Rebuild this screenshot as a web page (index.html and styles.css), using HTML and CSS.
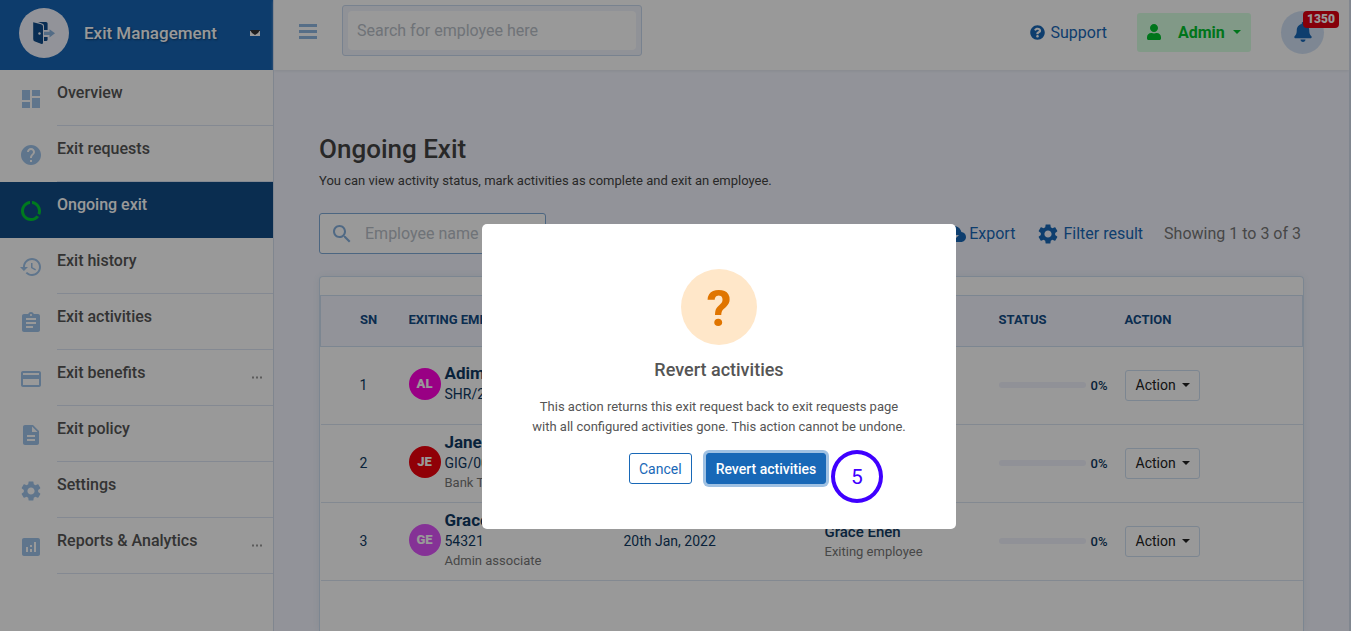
FILE: index.html
```html
<!DOCTYPE html>
<html lang="en">
<head>
<meta charset="utf-8">
<meta name="viewport" content="width=device-width, initial-scale=1">
<title>Ongoing Exit</title>
<link rel="stylesheet" href="styles.css">
</head>
<body>
<svg class="sprite" aria-hidden="true">
  <symbol id="i-gear" viewBox="0 0 24 24"><path d="M19.14 12.94c.04-.3.06-.61.06-.94 0-.32-.02-.64-.07-.94l2.03-1.58c.18-.14.23-.41.12-.61l-1.92-3.32c-.12-.22-.37-.29-.59-.22l-2.39.96c-.5-.38-1.03-.7-1.62-.94l-.36-2.54c-.04-.24-.24-.41-.48-.41h-3.84c-.24 0-.43.17-.47.41l-.36 2.54c-.59.24-1.13.57-1.62.94l-2.39-.96c-.22-.08-.47 0-.59.22L2.74 8.87c-.12.21-.08.47.12.61l2.03 1.58c-.05.3-.09.63-.09.94s.02.64.07.94l-2.03 1.58c-.18.14-.23.41-.12.61l1.92 3.32c.12.22.37.29.59.22l2.39-.96c.5.38 1.03.7 1.62.94l.36 2.54c.05.24.24.41.48.41h3.84c.24 0 .44-.17.47-.41l.36-2.54c.59-.24 1.13-.56 1.62-.94l2.39.96c.22.08.47 0 .59-.22l1.92-3.32c.12-.22.07-.47-.12-.61l-2.01-1.58zM12 15.6c-1.98 0-3.6-1.62-3.6-3.6s1.62-3.6 3.6-3.6 3.6 1.62 3.6 3.6-1.62 3.6-3.6 3.6z"/></symbol>
  <symbol id="i-dots" viewBox="0 0 12 4"><path d="M1 1h2v2H1zM5 1h2v2H5zM9 1h2v2H9z"/></symbol>
</svg>
<div class="app">
  <aside class="sidebar">
    <div class="brand">
      <span class="brand-logo">
        <svg width="24" height="24" viewBox="0 0 24 24"><path fill="#0f4c8a" d="M1.200 1.200 9 3.200Q11 3.800 11 5.500V21.500Q11 23.600 9 22.800L3 20.600Q1.200 20 1.200 18z"/><path fill="#0f4c8a" d="M6 1H14Q15.600 1 15.600 2.600V9H12V5Q12 3.400 10.500 2.800zM12 16h3.600v2.500Q15.600 20 14 20H12z"/><path fill="#8ab4df" d="M12 10.800h5.500V8.200L23 12.300 17.500 16.500V14H12z"/><circle cx="7.500" cy="12.500" r="1.200" fill="#f4f6ff"/></svg>
      </span>
      <span class="brand-name">Exit Management</span>
      <button class="brand-toggle" aria-label="Switch module"><svg width="10" height="6" viewBox="0 0 10 6"><path fill="#fff" d="M0 1h10v5H0z"/><path fill="#333" d="M0 0h10L8 3 5 5 2 3z"/></svg></button>
    </div>
    <nav class="menu">
      <a class="item" href="#"><svg class="icon" viewBox="0 0 24 24"><path d="M3 13h8V3H3v10zm0 8h8v-6H3v6zm10 0h8V11h-8v10zm0-18v6h8V3h-8z"/></svg><span class="label">Overview</span></a>
      <a class="item" href="#"><svg class="icon" viewBox="0 0 24 24"><path d="M12 2C6.480 2 2 6.480 2 12s4.480 10 10 10 10-4.480 10-10S17.520 2 12 2zm1 17h-2v-2h2v2zm2.070-7.750l-.9.920C13.450 12.900 13 13.500 13 15h-2v-.5c0-1.100.45-2.100 1.170-2.830l1.240-1.260c.37-.36.59-.86.59-1.410 0-1.100-.9-2-2-2s-2 .9-2 2H8c0-2.210 1.790-4 4-4s4 1.790 4 4c0 .88-.36 1.680-.93 2.250z"/></svg><span class="label">Exit requests</span></a>
      <a class="item active" href="#" aria-current="page"><svg class="icon" viewBox="0 0 24 24"><path d="M13 2.050v3.030c3.390.49 6 3.390 6 6.920 0 .9-.18 1.750-.48 2.540l2.600 1.530c.56-1.240.88-2.620.88-4.070 0-5.180-3.950-9.450-9-9.950zM12 19c-3.870 0-7-3.130-7-7 0-3.530 2.610-6.430 6-6.920V2.050c-5.060.5-9 4.760-9 9.950 0 5.520 4.470 10 9.990 10 3.310 0 6.240-1.610 8.060-4.090l-2.600-1.530C16.170 17.980 14.210 19 12 19z"/></svg><span class="label">Ongoing exit</span></a>
      <a class="item" href="#"><svg class="icon" viewBox="0 0 24 24"><path d="M13 3c-4.970 0-9 4.030-9 9H1l3.890 3.890.07.14L9 12H6c0-3.870 3.130-7 7-7s7 3.130 7 7-3.130 7-7 7c-1.930 0-3.680-.79-4.940-2.060l-1.420 1.420C8.270 19.990 10.510 21 13 21c4.970 0 9-4.030 9-9s-4.030-9-9-9zm-1 5v5l4.280 2.540.72-1.210-3.500-2.080V8H12z"/></svg><span class="label">Exit history</span></a>
      <a class="item" href="#"><svg class="icon" viewBox="0 0 24 24"><path d="M19 3h-4.180C14.400 1.840 13.300 1 12 1c-1.300 0-2.400.84-2.820 2H5c-1.100 0-2 .9-2 2v14c0 1.100.9 2 2 2h14c1.100 0 2-.9 2-2V5c0-1.100-.9-2-2-2zm-7 0c.55 0 1 .45 1 1s-.45 1-1 1-1-.45-1-1 .45-1 1-1zm2 14H7v-2h7v2zm3-4H7v-2h10v2zm0-4H7V7h10v2z"/></svg><span class="label">Exit activities</span></a>
      <a class="item" href="#"><svg class="icon" viewBox="0 0 24 24"><path d="M20 4H4c-1.110 0-1.990.89-1.990 2L2 18c0 1.110.89 2 2 2h16c1.110 0 2-.89 2-2V6c0-1.110-.89-2-2-2zm0 14H4v-6h16v6zm0-10H4V6h16v2z"/></svg><span class="label">Exit benefits</span><svg class="more" aria-hidden="true"><use href="#i-dots"/></svg></a>
      <a class="item" href="#"><svg class="icon" viewBox="0 0 24 24"><path d="M14 2H6c-1.100 0-1.990.9-1.990 2L4 20c0 1.100.89 2 1.990 2H18c1.100 0 2-.9 2-2V8l-6-6zm2 16H8v-2h8v2zm0-4H8v-2h8v2zm-3-5V3.500L18.500 9H13z"/></svg><span class="label">Exit policy</span></a>
      <a class="item" href="#"><svg class="icon"><use href="#i-gear"/></svg><span class="label">Settings</span></a>
      <a class="item" href="#"><svg class="icon" viewBox="0 0 24 24"><path d="M19 3H5c-1.100 0-2 .9-2 2v14c0 1.100.9 2 2 2h14c1.100 0 2-.9 2-2V5c0-1.100-.9-2-2-2zM9 17H7v-5h2v5zm4 0h-2v-3h2v3zm0-5h-2v-2h2v2zm4 5h-2V7h2v10z"/></svg><span class="label">Reports &amp; Analytics</span><svg class="more" aria-hidden="true"><use href="#i-dots"/></svg></a>
    </nav>
  </aside>

  <div class="page">
    <header class="topbar">
      <button class="burger" aria-label="Toggle menu"><svg width="18" height="16" viewBox="0 0 18 16"><path d="M0 0h18v3H0zM0 6h18v3H0zM0 12h18v3H0z"/></svg></button>
      <div class="global-search"><input type="search" aria-label="Search for employee here" placeholder="Search for employee here"></div>
      <a class="support" href="#"><svg width="15" height="15" viewBox="0 0 512 512"><path d="M504 256c0 137-111 248-248 248S8 393 8 256 119 8 256 8s248 111 248 248zM262.700 90c-54.500 0-89.300 23-116.500 63.800-3.500 5.300-2.400 12.400 2.700 16.300l34.700 26.300c5.200 3.900 12.600 3 16.700-2.100 17.900-22.700 30.100-35.800 57.300-35.800 20.400 0 45.700 13.100 45.700 33 0 15-12.400 22.700-32.500 34C247.100 238.500 216 254.900 216 296v4c0 6.600 5.400 12 12 12h56c6.600 0 12-5.400 12-12v-1.300c0-28.500 83.200-29.600 83.200-106.700 0-58-60.200-102-116.500-102zM256 338c-25.400 0-46 20.600-46 46s20.600 46 46 46 46-20.600 46-46-20.600-46-46-46z"/></svg>Support</a>
      <button class="admin"><svg width="14" height="16" viewBox="0 0 448 512"><path d="M224 256c70.700 0 128-57.300 128-128S294.700 0 224 0 96 57.300 96 128s57.300 128 128 128zm89.600 32h-16.700c-22.200 10.200-46.900 16-72.900 16s-50.600-5.800-72.900-16h-16.700C60.200 288 0 348.200 0 422.400V464c0 26.500 21.500 48 48 48h352c26.500 0 48-21.500 48-48v-41.600c0-74.200-60.200-134.400-134.400-134.400z"/></svg>Admin<span class="caret"></span></button>
      <button class="bell" aria-label="Notifications, 1350"><svg width="18" height="20" viewBox="0 0 448 512"><path d="M224 512c35.300 0 64-28.700 64-64H160c0 35.300 28.700 64 64 64zm215.400-149.700c-19.300-20.800-55.500-52-55.500-154.300 0-77.700-54.500-139.900-128-155.200V32c0-17.700-14.300-32-32-32s-32 14.300-32 32v20.800C118.600 68.100 64.100 130.300 64.100 208c0 102.300-36.200 133.500-55.500 154.300-6 6.400-8.700 14.100-8.600 21.700.1 16.400 13 32 32.100 32h383.800c19.100 0 32-15.600 32.100-32 .1-7.600-2.600-15.300-8.600-21.700z"/></svg><span class="count">1350</span></button>
    </header>

    <main class="content">
      <h1>Ongoing Exit</h1>
      <p class="lead">You can view activity status, mark activities as complete and exit an employee.</p>
      <div class="toolbar">
        <label class="filter-box"><svg width="24" height="24" viewBox="0 0 24 24"><path d="M15.500 14h-.79l-.28-.27C15.410 12.590 16 11.110 16 9.500 16 5.910 13.090 3 9.500 3S3 5.910 3 9.500 5.910 16 9.500 16c1.610 0 3.090-.59 4.230-1.570l.27.28v.79l5 4.990L20.490 19l-4.990-5zm-6 0C7.010 14 5 11.990 5 9.500S7.010 5 9.500 5 14 7.010 14 9.500 11.990 14 9.500 14z"/></svg><input type="text" aria-label="Employee name" placeholder="Employee name"></label>
        <a class="tool" href="#"><svg width="24" height="24" viewBox="0 0 24 24"><path d="M19.350 10.040C18.670 6.590 15.640 4 12 4 9.110 4 6.600 5.640 5.350 8.040 2.340 8.360 0 10.910 0 14c0 3.310 2.690 6 6 6h13c2.760 0 5-2.240 5-5 0-2.640-2.050-4.780-4.650-4.960zM17 13l-5 5-5-5h3V9h4v4h3z"/></svg>Export</a>
        <a class="tool" href="#"><svg width="24" height="24"><use href="#i-gear"/></svg>Filter result</a>
        <span class="showing">Showing 1 to 3 of 3</span>
      </div>
      <section class="card">
        <table>
          <colgroup><col class="c-sn"><col class="c-emp"><col class="c-date"><col class="c-by"><col class="c-status"><col></colgroup>
          <thead><tr><th>SN</th><th>EXITING EMPLOYEE</th><th>EXIT DATE</th><th>HANDLER</th><th>STATUS</th><th>ACTION</th></tr></thead>
          <tbody>
            <tr><td>1</td><td><div class="person"><span class="avatar al">AL</span><div><b>Adim L.</b><span>SHR/21</span></div></div></td><td></td><td></td><td><div class="status"><span class="track"></span>0%</div></td><td><button class="action">Action<span class="caret"></span></button></td></tr>
            <tr><td>2</td><td><div class="person"><span class="avatar je">JE</span><div><b>Jane E.</b><span>GIG/001</span><small>Bank Teller</small></div></div></td><td></td><td></td><td><div class="status"><span class="track"></span>0%</div></td><td><button class="action">Action<span class="caret"></span></button></td></tr>
            <tr><td>3</td><td><div class="person"><span class="avatar ge">GE</span><div><b>Grace</b><span>54321</span><small>Admin associate</small></div></div></td><td>20th Jan, 2022</td><td><div class="by"><strong>Grace Ehen</strong><small>Exiting employee</small></div></td><td><div class="status"><span class="track"></span>0%</div></td><td><button class="action">Action<span class="caret"></span></button></td></tr>
          </tbody>
        </table>
      </section>
    </main>
  </div>
</div>

<div class="backdrop">
  <div class="modal" role="dialog" aria-modal="true" aria-labelledby="modal-title">
    <div class="modal-icon">?</div>
    <h2 id="modal-title">Revert activities</h2>
    <p>This action returns this exit request back to exit requests page<br>with all configured activities gone. This action cannot be undone.</p>
    <div class="modal-actions">
      <button class="btn cancel">Cancel</button>
      <button class="btn primary">Revert activities</button>
    </div>
    <span class="step">5</span>
  </div>
</div>
</body>
</html>
```
FILE: styles.css
```css
* { box-sizing: border-box; }
body {
  margin: 0;
  height: 100vh;
  overflow: hidden;
  font-family: Roboto, "Liberation Sans", sans-serif;
  font-size: 14px;
  color: #0f3a63;
  background: #f4f6ff;
}
button, input { font: inherit; color: inherit; margin: 0; }
button { border: 0; background: none; padding: 0; }
a { text-decoration: none; color: #1868b7; }
svg { display: block; fill: currentColor; flex: none; }
.sprite { display: none; }
.caret {
  border: 4px solid transparent;
  border-top-color: currentColor;
  border-bottom-width: 0;
}

.app { display: flex; height: 100%; border-right: 2px solid #d5dfee; }

.sidebar { width: 274px; flex: none; background: #fff; border-right: 1px solid #d5dfee; }
.brand {
  display: flex;
  align-items: center;
  height: 70px;
  padding: 0 13px 4px 19px;
  background: #1665b5;
}
.brand-logo {
  display: grid;
  place-items: center;
  width: 50px;
  height: 50px;
  border-radius: 50%;
  background: #f4f6ff;
}
.brand-name {
  margin-left: 15px;
  flex: 1;
  font-size: 17px;
  font-weight: 500;
  color: #fff;
  text-shadow: 1px 1px 2px #0b3d70;
}
.item { display: flex; height: 56px; padding-left: 19px; color: #555; }
.icon { width: 24px; height: 24px; margin-top: 17px; color: #9ec3ea; }
.label {
  flex: 1;
  margin-left: 14px;
  padding-top: 13px;
  line-height: 20px;
  font-size: 16px;
  font-weight: 500;
  border-bottom: 1px solid #dde5f3;
}
.more {
  width: 28px;
  height: 56px;
  padding: 0 10px 0 6px;
  border-bottom: 1px solid #dde5f3;
  color: #999;
}
.active { background: #124b85; color: #fff; }
.active .icon { color: #00cc33; }
.active .label { border-color: #124b85; }

.page { display: flex; flex-direction: column; flex: 1; min-width: 0; }
.topbar {
  display: flex;
  flex: none;
  align-items: center;
  height: 70px;
  padding: 0 26px 6px 25px;
  background: #fff;
  box-shadow: 0 1px 3px #e0e4ee;
}
.burger { color: #8fb8e2; }
.global-search {
  width: 300px;
  height: 51px;
  margin: 0 auto 3px 25px;
  padding: 5px;
  border: 1px solid #c9d9ee;
  border-radius: 3px;
  background: #f0f3fc;
}
.global-search input {
  width: 100%;
  height: 100%;
  padding: 0 9px;
  border: 0;
  border-radius: 4px;
  background: #fff;
  font-size: 16px;
}
::placeholder { color: #b9c0c8; opacity: 1; }
.support { display: flex; align-items: center; gap: 6px; font-size: 16px; }
.admin {
  display: flex;
  align-items: center;
  width: 114px;
  height: 39px;
  margin: 0 30px;
  padding: 0 10px;
  border-radius: 3px;
  background: #d8ffe2;
  color: #00c32e;
  font-size: 16px;
  font-weight: 700;
}
.admin svg { margin-right: 17px; }
.admin .caret { margin-left: auto; }
.bell {
  position: relative;
  display: grid;
  place-items: center;
  width: 43px;
  height: 43px;
  margin-right: -1px;
  border-radius: 50%;
  background: #d3e2f6;
  color: #1868b7;
}
.count {
  position: absolute;
  top: 0;
  left: 22px;
  width: 36px;
  border-radius: 4px;
  background: #df0012;
  color: #fff;
  line-height: 17px;
  font-size: 12px;
  font-weight: 900;
  text-align: center;
}

.content { display: flex; flex-direction: column; flex: 1; min-height: 0; padding: 63px 45px 0; }
h1 { margin: 0; line-height: 32px; font-size: 26px; font-weight: 500; color: #444; }
.lead { margin: 6px 0 22px; line-height: 20px; font-size: 13px; color: #444; }
.toolbar { display: flex; align-items: center; height: 41px; margin-bottom: 22px; font-size: 16px; }
.filter-box {
  display: flex;
  align-items: center;
  width: 227px;
  height: 41px;
  margin-right: auto;
  padding-left: 10px;
  border: 1px solid #7faad8;
  border-radius: 3px;
  background: #fff;
  color: #85b0dd;
}
.filter-box input { width: 160px; margin-left: 11px; padding: 0; border: 0; background: none; }
.tool { display: flex; align-items: center; gap: 3px; margin-right: 21px; }
.showing { padding-right: 3px; color: #777; }

.card {
  flex: 1;
  min-height: 0;
  padding-top: 18px;
  border: 1px solid #cfe0f2;
  border-bottom: 0;
  border-radius: 4px 4px 0 0;
  background: #fff;
  box-shadow: 0 0 8px #e2e8f4;
}
table { width: 100%; border-collapse: collapse; table-layout: fixed; }
.c-sn { width: 88px; }
.c-emp { width: 215px; }
.c-date { width: 201px; }
.c-by { width: 174px; }
.c-status { width: 126px; }
th {
  height: 51px;
  padding: 0 0 3px;
  text-align: left;
  font-size: 13px;
  font-weight: 700;
  color: #124b85;
}
th:first-child, td:first-child { padding-left: 39px; }
thead tr { background: #f4f6ff; border: 1px solid #cfe0f2; }
td { height: 78px; padding: 0 0 1px; border-bottom: 1px solid #dae5f2; }
.person { display: flex; align-items: center; gap: 4px; height: 74px; padding-bottom: 3px; }
.person div, .by { display: flex; flex-direction: column; }
.person b { line-height: 21px; font-size: 17px; font-weight: 700; }
.person span:not(.avatar) { line-height: 20px; }
small { line-height: 19px; font-size: 13px; color: #777; }
.by strong { line-height: 20px; font-size: 15px; font-weight: 500; }
.avatar {
  display: grid;
  place-items: center;
  width: 32px;
  height: 32px;
  border-radius: 50%;
  color: #fff;
  font-size: 13px;
  font-weight: 900;
}
.al { background: #ff00dc; }
.je { background: #f0000c; }
.ge { background: #de54fa; }
.status { display: flex; align-items: center; gap: 5px; font-size: 13px; font-weight: 500; }
.track { width: 87px; height: 6px; border-radius: 3px; background: #f0f2fc; }
.action {
  display: flex;
  align-items: center;
  gap: 6px;
  height: 31px;
  padding: 0 9px 0 10px;
  border: 1px solid #cfe0f2;
  border-radius: 3px;
  color: #222;
}

.backdrop {
  position: fixed;
  inset: 0;
  display: flex;
  align-items: center;
  justify-content: center;
  padding: 122px 0 0 87px;
  background: rgba(0, 0, 0, 0.4);
}
.modal {
  position: relative;
  display: flex;
  flex-direction: column;
  align-items: center;
  width: 474px;
  padding: 45px;
  border-radius: 5px;
  background: #fff;
  color: #555;
}
.modal-icon {
  display: grid;
  place-items: center;
  width: 76px;
  height: 76px;
  padding-top: 4px;
  border-radius: 50%;
  background: #ffe7c9;
  color: #e07500;
  font-size: 50px;
  font-weight: 700;
}
.modal h2 { margin: 13px 0 15px; line-height: 24px; font-size: 18px; font-weight: 500; }
.modal p { margin: 0; line-height: 20px; font-size: 13px; text-align: center; white-space: nowrap; }
.modal-actions { display: flex; gap: 14px; align-self: stretch; margin-top: 16px; padding-left: 102px; }
.btn { height: 31px; padding: 0 9px; border: 1px solid #1868b7; border-radius: 3px; font-size: 14px; }
.cancel { color: #1868b7; }
.primary { background: #1868b7; color: #fff; font-weight: 500; box-shadow: 0 0 0 3px #9fc1e3; }
.step {
  position: absolute;
  right: 73px;
  bottom: 26px;
  display: grid;
  place-items: center;
  width: 52px;
  height: 53px;
  border: 4px solid #3f00ff;
  border-radius: 50%;
  color: #3f00ff;
  font-size: 21px;
}
```
